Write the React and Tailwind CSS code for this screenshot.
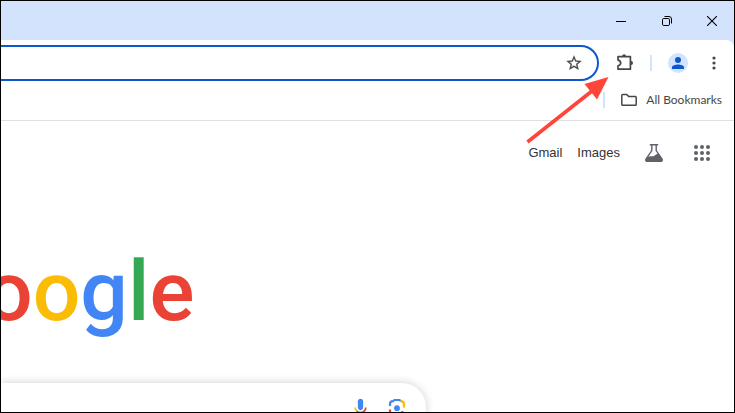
import React from "react";

function StarIcon() {
  return (
    <svg width="18" height="18" viewBox="0 0 24 24" fill="#474747" stroke="#474747" strokeWidth=".3" aria-hidden="true">
      <path d="M22 9.24l-7.19-.62L12 2 9.19 8.63 2 9.24l5.46 4.73L5.82 21 12 17.27 18.18 21l-1.63-7.03L22 9.24zM12 15.4l-3.76 2.27 1-4.28-3.32-2.88 4.38-.38L12 6.1l1.71 4.04 4.38.38-3.32 2.88 1 4.28L12 15.4z" />
    </svg>
  );
}

function PuzzleIcon() {
  return (
    <svg width="18" height="18" viewBox="0 0 18 18" fill="none" aria-hidden="true">
      <path
        d="M2 2.6H14.4V15.2H2V11.8C3.7 11.4 4.7 10.4 4.7 9C4.7 7.6 3.7 6.5 2 6.1Z"
        stroke="#474747"
        strokeWidth="1.7"
        strokeLinejoin="round"
      />
      <path d="M6.2 2.2A1.9 1.9 0 0 1 10 2.2ZM15 7A2 2 0 0 1 15 11Z" fill="#474747" />
    </svg>
  );
}

function FolderIcon() {
  return (
    <svg width="18" height="14" viewBox="0 0 18 14" fill="none" aria-hidden="true">
      <path
        d="M1.8 2.2Q1.8 1.4 2.6 1.4H6.6L8.6 3.4H15.4Q16.2 3.4 16.2 4.2V11.4Q16.2 12.2 15.4 12.2H2.6Q1.8 12.2 1.8 11.4Z"
        stroke="#474747"
        strokeWidth="1.5"
      />
    </svg>
  );
}

function FlaskIcon() {
  return (
    <svg width="20" height="20" viewBox="0 0 20 20" fill="none" aria-hidden="true">
      <path
        d="M5.8 1.8H14.2M7.8 2V7.6L2 16Q1.2 18.2 3.2 18.2H16.8Q18.8 18.2 18 16L12.2 7.6V2"
        stroke="#5f6368"
        strokeWidth="1.4"
      />
      <path d="M3.4 14.6C6.4 12.2 8 14.4 10.6 12.6C12 11.6 12.8 10.6 14.6 10.4L18.4 16.2Q19 18.8 16.8 18.9H3.2Q1 18.8 1.6 16.7Z" fill="#5f6368" />
    </svg>
  );
}

function AppsIcon() {
  return (
    <svg width="16" height="16" viewBox="0 0 16 16" fill="#5f6368" aria-hidden="true">
      {[2, 8, 14].map((y) => [2, 8, 14].map((x) => <circle key={`${x}-${y}`} cx={x} cy={y} r="2" />))}
    </svg>
  );
}

function MicIcon() {
  return (
    <svg width="21" height="21" viewBox="0 0 24 24" aria-hidden="true">
      <path fill="#4285f4" d="M12 15c1.66 0 3-1.31 3-2.97V4.98C15 3.34 13.66 2 12 2S9 3.34 9 4.98v7.05C9 13.69 10.34 15 12 15z" />
      <path fill="#34a853" d="M11 18.08h2V22h-2z" />
      <path fill="#fbbc05" d="M7.05 16.87C5.78 15.59 5 13.83 5 12h2c0 1.45.56 2.42 1.47 3.38z" />
      <path fill="#ea4335" d="M12 16.93a4.97 5.25 0 0 1-3.54-1.55l-1.41 1.49c1.26 1.34 3.02 2.13 4.95 2.13 3.87 0 6.99-2.92 6.99-7h-1.99c0 2.92-2.24 4.93-5.01 4.93z" />
    </svg>
  );
}

function LensIcon() {
  return (
    <svg width="24" height="24" viewBox="0 0 24 24" fill="none" aria-hidden="true">
      <circle cx="12" cy="13.2" r="2.9" fill="#4285f4" />
      <path d="M5 11V9Q5 6.2 8 6.2L9.5 5H14.5L16 6.2" stroke="#4285f4" strokeWidth="2.2" />
      <path d="M15.6 6.2Q19 6.2 19 9V12.6" stroke="#fbbc04" strokeWidth="2.2" />
      <path d="M5 14.4V17.5Q5 20 7.5 20H12" stroke="#ea4335" strokeWidth="2.2" />
      <circle cx="17.3" cy="17.8" r="1.8" fill="#34a853" />
    </svg>
  );
}

function TitleBar() {
  return (
    <header className="flex h-[39px] justify-end bg-[#d3e3fd] text-black">
      <button aria-label="Minimize" className="flex w-[46px] items-center justify-center">
        <svg width="10" height="10" viewBox="0 0 10 10" stroke="currentColor"><path d="M0 5.5H10" /></svg>
      </button>
      <button aria-label="Restore" className="flex w-[46px] items-center justify-center">
        <svg width="10" height="10" viewBox="0 0 10 10" fill="none" stroke="currentColor">
          <rect x=".5" y="2.5" width="7" height="7" rx="1.3" />
          <path d="M2.5 .5H7Q9.5 .5 9.5 3V7.5" />
        </svg>
      </button>
      <button aria-label="Close" className="flex w-11 items-center justify-center">
        <svg width="10" height="10" viewBox="0 0 10 10" stroke="currentColor" strokeWidth="1.1"><path d="M0 0L10 10M10 0L0 10" /></svg>
      </button>
    </header>
  );
}

function Toolbar() {
  return (
    <div className="flex items-center pt-[5px] pr-[10px]">
      <div className="flex h-9 flex-1 items-center rounded-r-full border-2 border-l-0 border-[#0b57d0] pr-[14px]">
        <input aria-label="Address" className="min-w-0 flex-1 bg-transparent px-3 text-sm outline-none" />
        <button aria-label="Bookmark this tab"><StarIcon /></button>
      </div>
      <button aria-label="Extensions" className="ml-[10px] flex w-8 justify-center"><PuzzleIcon /></button>
      <span className="ml-[9px] h-4 w-[2px] bg-[#d3e3fd]" />
      <button aria-label="Profile" className="ml-4 flex size-5 items-center justify-center rounded-full bg-[#d3e3fd]">
        <svg width="12" height="12" viewBox="0 0 12 12" fill="#0b57d0" aria-hidden="true">
          <circle cx="6" cy="3" r="3" />
          <path d="M0 12V10.3C0 8.5 3.5 7.5 6 7.5S12 8.5 12 10.3V12Z" />
        </svg>
      </button>
      <button aria-label="Menu" className="ml-4 flex w-5 justify-center">
        <svg width="4" height="14" viewBox="0 0 4 14" fill="#474747" aria-hidden="true">
          <circle cx="2" cy="2" r="1.6" /><circle cx="2" cy="7" r="1.6" /><circle cx="2" cy="12" r="1.6" />
        </svg>
      </button>
    </div>
  );
}

function BookmarksBar() {
  return (
    <div className="flex h-10 items-center justify-end border-b border-[#e0e0e0] pr-3 pb-[2px]">
      <span className="h-4 w-[2px] bg-[#d3e3fd]" />
      <button className="ml-[15px] flex items-center gap-2 font-['Lato','Noto_Sans',sans-serif] text-[12px] leading-4 text-[#474747]">
        <FolderIcon />
        All Bookmarks
      </button>
    </div>
  );
}

function Logo() {
  return (
    <h1 className="-ml-4 mt-[51px] font-['Roboto',sans-serif] text-[84px] leading-[112px] font-medium whitespace-nowrap">
      <span className="text-[#ea4335]">o</span>
      <span className="text-[#fbbc05]">o</span>
      <span className="text-[#4285f4]">g</span>
      <span className="text-[#34a853]">l</span>
      <span className="text-[#ea4335]">e</span>
    </h1>
  );
}

export default function App() {
  return (
    <div className="relative flex h-screen flex-col overflow-hidden border border-black bg-white font-['Liberation_Sans',Arial,sans-serif]">
      <div className="bg-[#d3e3fd]">
        <TitleBar />
        <div className="rounded-tr-lg bg-white">
          <Toolbar />
          <BookmarksBar />
        </div>
      </div>
      <main className="min-h-0 flex-1 overflow-hidden">
        <nav className="flex h-16 items-center justify-end pr-6 text-[13px] leading-4 text-[#333]">
          <a href="#gmail">Gmail</a>
          <a href="#images" className="ml-[15px]">Images</a>
          <button aria-label="Search Labs" className="ml-6"><FlaskIcon /></button>
          <button aria-label="Google apps" className="ml-[30px]"><AppsIcon /></button>
        </nav>
        <Logo />
        <form className="mt-[35px] flex h-12 w-[425px] items-center gap-[14px] rounded-r-full pr-[17px] shadow-[0_0_8px_rgba(32,33,36,0.22)]">
          <input aria-label="Search" className="min-w-0 flex-1 bg-transparent px-4 outline-none" />
          <button type="button" aria-label="Search by voice"><MicIcon /></button>
          <button type="button" aria-label="Search by image"><LensIcon /></button>
        </form>
      </main>
      <svg className="pointer-events-none absolute top-[75px] right-[124px]" width="84" height="70" viewBox="526 76 84 70" aria-hidden="true">
        <path d="M527.5 142L592 91" stroke="#ff453a" strokeWidth="3.6" />
        <path d="M608.5 77L584.5 84L597 99.5Z" fill="#ff453a" />
      </svg>
    </div>
  );
}
